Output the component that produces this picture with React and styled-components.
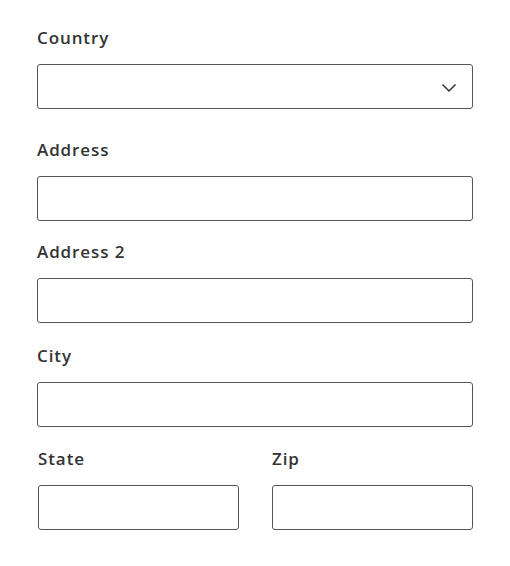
import React from "react";
import styled, { createGlobalStyle } from "styled-components";

const Global = createGlobalStyle`
  html, body { margin: 0; padding: 0; background: #fff; }
  body { font-family: "Open Sans", "DejaVu Sans", sans-serif; }
`;

const Form = styled.form`
  width: 436px;
  padding: 28px 0 0 37px;
  display: flex;
  flex-direction: column;
`;

const Field = styled.div`
  display: flex;
  flex-direction: column;
  margin-top: ${(p) => p.$top || 0}px;
  padding-left: ${(p) => p.$indent || 0}px;
  flex: 1;
`;

const Label = styled.label`
  font-size: 17px;
  font-weight: 600;
  color: #333;
  line-height: 20px;
  height: 20px;
  margin-bottom: 16px;
  letter-spacing: 0.9px;
`;

const Box = styled.div`
  position: relative;
  height: 45px;
  box-sizing: border-box;
  border: 1px solid #555;
  border-radius: 3px;
  background: #fff;
`;

const Input = styled.input`
  width: 100%;
  height: 100%;
  box-sizing: border-box;
  border: none;
  outline: none;
  background: transparent;
  padding: 0 12px;
  font-family: inherit;
  font-size: 16px;
`;

const Chevron = styled.svg`
  position: absolute;
  right: 15px;
  top: 18px;
`;

const Row = styled.div`
  display: flex;
  gap: 33px;
  margin-top: 22px;
`;

export default function App() {
  return (
    <>
      <Global />
      <Form>
        <Field>
          <Label>Country</Label>
          <Box>
            <Chevron width="16" height="10" viewBox="0 0 16 10">
              <path d="M1.5 1.5 L8 8 L14.5 1.5" fill="none" stroke="#333" strokeWidth="1.5" />
            </Chevron>
          </Box>
        </Field>
        <Field $top={31}>
          <Label>Address</Label>
          <Box><Input /></Box>
        </Field>
        <Field $top={21}>
          <Label>Address 2</Label>
          <Box><Input /></Box>
        </Field>
        <Field $top={23}>
          <Label>City</Label>
          <Box><Input /></Box>
        </Field>
        <Row>
          <Field $indent={1}>
            <Label>State</Label>
            <Box><Input /></Box>
          </Field>
          <Field>
            <Label>Zip</Label>
            <Box><Input /></Box>
          </Field>
        </Row>
      </Form>
    </>
  );
}
